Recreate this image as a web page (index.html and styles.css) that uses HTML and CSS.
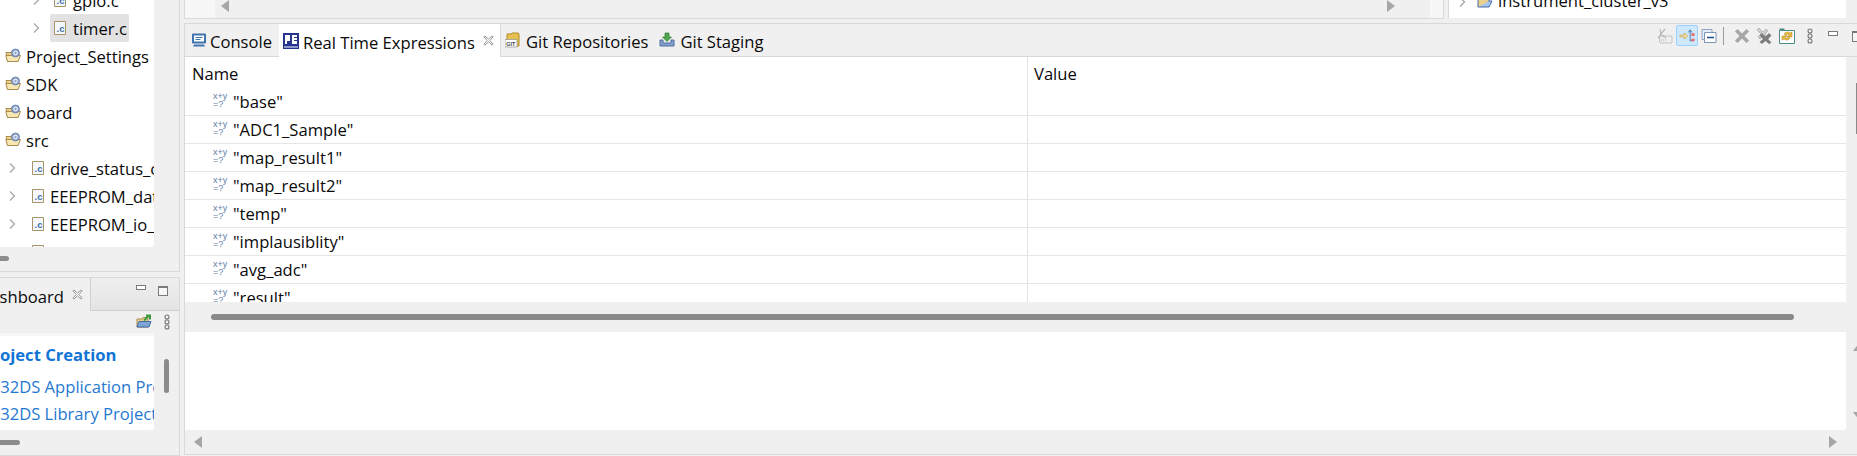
FILE: index.html
```html
<!DOCTYPE html>
<html lang="en">
<head>
<meta charset="utf-8">
<title>Real Time Expressions</title>
<link rel="stylesheet" href="styles.css">
</head>
<body>
<svg class="defs" aria-hidden="true">
  <symbol id="chev" viewBox="0 0 8 12"><path d="M2 1.500 6.500 6 2 10.500" fill="none" stroke="#a8a8a8" stroke-width="1.300"/></symbol>
  <symbol id="cfile" viewBox="0 0 16 16"><path d="M2.500 1.500h11v13h-11z" fill="#f4f7fb" stroke="#a89466"/><text x="4.500" y="12" font-family="Liberation Sans" font-weight="700" font-size="9.500" fill="#3f6fa8">.c</text></symbol>
  <symbol id="cfolder" viewBox="0 0 16 16"><path d="M1 4.500h5l1-1.500h6l.5 2V13H2.500z" fill="#e9d08c" stroke="#a98b4c"/><path d="M.8 7.500h10.700l4 0L13 13.500H2.500z" fill="#f6e7b5" stroke="#a98b4c"/><circle cx="10.500" cy="5" r="4" fill="#8ea6cf" stroke="#5e79a8" stroke-width=".8"/><circle cx="10.500" cy="5" r="1.800" fill="none" stroke="#fff"/></symbol>
  <symbol id="xy" viewBox="0 0 16 16"><text x="0" y="7" font-family="Liberation Sans" font-size="9" fill="#5f7da6">x+y</text><text x="0" y="15" font-family="Liberation Sans" font-size="9" fill="#5f7da6">=?</text></symbol>
  <symbol id="close" viewBox="0 0 12 12"><path d="M2 1 6 4.500 10 1l1 1-3.500 4L11 10l-1 1-4-3.500L2 11l-1-1 3.500-4L1 2z" fill="#fff" stroke="#8a8a8a"/></symbol>
  <symbol id="kebab" viewBox="0 0 6 16"><g fill="none" stroke="#777" stroke-width="1.100"><circle cx="3" cy="3" r="2"/><circle cx="3" cy="8" r="2"/><circle cx="3" cy="13" r="2"/></g></symbol>
  <symbol id="bigx" viewBox="0 0 16 16"><path d="M3.500 1 8 5.500 12.500 1 15 3.500 10.500 8l4.500 4.500-2.500 2.500L8 10.500 3.500 15 1 12.500 5.500 8 1 3.500z" fill="#a6a6a6"/></symbol>
</svg>
<div class="app">
  <aside class="left">
    <section class="explorer">
      <div class="tree">
        <div class="row lvl2 first"><svg class="chev"><use href="#chev"/></svg><svg class="ico"><use href="#cfile"/></svg><span>gpio.c</span></div>
        <div class="row lvl2"><svg class="chev"><use href="#chev"/></svg><span class="sel"><svg class="ico"><use href="#cfile"/></svg><span>timer.c</span></span></div>
        <div class="row lvl0"><svg class="ico"><use href="#cfolder"/></svg><span>Project_Settings</span></div>
        <div class="row lvl0"><svg class="ico"><use href="#cfolder"/></svg><span>SDK</span></div>
        <div class="row lvl0"><svg class="ico"><use href="#cfolder"/></svg><span>board</span></div>
        <div class="row lvl0"><svg class="ico"><use href="#cfolder"/></svg><span>src</span></div>
        <div class="row lvl1"><svg class="chev"><use href="#chev"/></svg><svg class="ico"><use href="#cfile"/></svg><span>drive_status_check.c</span></div>
        <div class="row lvl1"><svg class="chev"><use href="#chev"/></svg><svg class="ico"><use href="#cfile"/></svg><span>EEEPROM_data.c</span></div>
        <div class="row lvl1"><svg class="chev"><use href="#chev"/></svg><svg class="ico"><use href="#cfile"/></svg><span>EEEPROM_io_func.c</span></div>
        <div class="row lvl1"><svg class="chev"><use href="#chev"/></svg><svg class="ico"><use href="#cfile"/></svg><span>main.c</span></div>
      </div>
      <div class="lscroll"><i class="thumb-s"></i></div>
    </section>
    <section class="dash">
      <div class="dash-tabs">
        <div class="dash-tab"><span class="dash-title">Information Dashboard</span><svg class="close"><use href="#close"/></svg></div>
        <div class="winbtns">
          <i class="min"></i><i class="max"></i>
        </div>
      </div>
      <div class="dash-tools">
        <svg class="ico" viewBox="0 0 16 16"><path d="M1 5h5l1-1.500h5V13H1z" fill="#e9d08c" stroke="#a98b4c"/><path d="M1 13 3 7.500h12L13 13z" fill="#7ea4d8" stroke="#44699f"/><path d="M8 6.500 13 1.500m-3 0h4v4" fill="none" stroke="#3f9a3f" stroke-width="2"/></svg>
        <svg class="kebab"><use href="#kebab"/></svg>
      </div>
      <div class="dash-body">
        <div class="dash-content">
          <div class="dash-head">Project Creation</div>
          <a class="dash-link">STM32DS Application Project</a>
          <a class="dash-link">STM32DS Library Project</a>
        </div>
        <div class="dash-rail"><i class="thumb-v"></i></div>
      </div>
      <div class="lscroll dash-scroll"><i class="thumb-s2"></i></div>
    </section>
  </aside>
  <main class="right">
    <div class="top">
      <div class="top-scroll">
        <i class="corner"></i><i class="tri-l"></i><span class="grow"></span><i class="tri-r"></i><i class="corner2"></i>
      </div>
      <div class="outline">
        <svg class="chev"><use href="#chev"/></svg>
        <svg class="ico" viewBox="0 0 16 16"><path d="M1 13 4 7h11l-3 6z" fill="#a9c6ee" stroke="#44699f"/><path d="M1 13V4h5l1 1h5v2" fill="#e9d08c" stroke="#44699f"/></svg>
        <span>instrument_cluster_v3</span>
      </div>
    </div>
    <section class="expr">
      <div class="tabs">
        <div class="tab">
          <svg class="tab-ico" viewBox="0 0 16 16"><path d="M2 1.500h12a1 1 0 0 1 1 1v8a1 1 0 0 1-1 1H2a1 1 0 0 1-1-1v-8a1 1 0 0 1 1-1z" fill="#3f74ae"/><path d="M3 3.500h10v6H3z" fill="#fff"/><path d="M4.500 5.500h7M4.500 7.500h5" stroke="#3f74ae"/><path d="M3 12.500h10l1 2H2z" fill="#3f74ae"/></svg>
          <span>Console</span>
        </div>
        <div class="tab active">
          <svg class="tab-ico" viewBox="0 0 16 16"><path d="M0 0h16v16H0z" fill="#25358f"/><path d="M2 2h5v6H4v3H2zM9 2h5v2h-3v1h3v2h-3v1h3v3H9z" fill="#fff"/><path d="M1 13h14v2H1z" fill="#8e98c9"/></svg>
          <span>Real Time Expressions</span>
          <svg class="close tab-close"><use href="#close"/></svg>
        </div>
        <div class="tab plain">
          <svg class="tab-ico" viewBox="0 0 16 16"><path d="M2 2h4l1-1h6l1 1v12H2z" fill="#e6c04f" stroke="#b08a2a"/><path d="M0 7.500h12v7.500H0z" fill="#fff" stroke="#999" stroke-width=".8"/><text x="1.200" y="13.600" font-family="Liberation Sans" font-weight="700" font-size="5.500" fill="#444">GIT</text></svg>
          <span>Git Repositories</span>
        </div>
        <div class="tab plain">
          <svg class="tab-ico" viewBox="0 0 16 16"><path d="M1 8h3v3h8V8h3v6H1z" fill="#86a0cb" stroke="#4d6da3"/><path d="M6 1h4v4h2.500L8 9.500 3.500 5H6z" fill="#4fa64f" stroke="#2f7d2f" stroke-width=".7"/></svg>
          <span>Git Staging</span>
        </div>
        <div class="grow"></div>
        <div class="tools">
          <svg class="tool t-faded" viewBox="0 0 16 16"><path d="M2 8h13v7H3z" fill="#eeeeee" stroke="#c4c4c4"/><path d="M3 1 4 7 1 10M8 1 3 7m2 0 4 3" fill="none" stroke="#b9b9b9" stroke-width="1.200"/><path d="M4 12h1m1 0h1m1 0h1" stroke="#aaa"/></svg>
          <span class="tool-on">
            <svg class="tool" viewBox="0 0 18 16"><path d="M1 7h5V4.500L10 8l-4 3.500V9H1z" fill="#f3e3a8" stroke="#c7a548" stroke-width=".8"/><path d="M12.500 6V2m-2 2 2-3 2 3M12.500 6v7.500h2" fill="none" stroke="#3f6f9f"/><path d="M14 5h3.500v3H14zM14 11h3.500v3H14z" fill="#e26a6a"/></svg>
          </span>
          <svg class="tool t-coll" viewBox="0 0 16 16"><path d="M1 1.500h10v10H1z" fill="#e6edf6" stroke="#8fa3bf"/><path d="M3.500 4.500h11.500v10H3.500z" fill="#fff" stroke="#7e95b5"/><path d="M6 9.500h7" stroke="#24528a" stroke-width="1.600"/></svg>
          <i class="vsep"></i>
          <svg class="tool t-x"><use href="#bigx"/></svg>
          <svg class="tool t-xx" viewBox="0 0 16 16"><path d="M3 0 7 4l3-3 2 2-3 3 4 4-2 2-4-4-3 3-2-2 3-3-4-4z" fill="#cfcfcf" stroke="#9a9a9a" stroke-width=".6"/><path d="M6 5 9.500 8.500 13 5l2.500 2.500L12 11l3.500 3.500L13 16l-3.500-3L6 16l-2.500-2L7 11 3.500 7.500z" fill="#7d7d7d"/></svg>
          <svg class="tool t-sync" viewBox="0 0 16 16"><path d="M.5 2.500h15v13H.5z" fill="#fff" stroke="#4e8a86"/><path d="M.5 2.500V.5h5v2" fill="#4e8a86"/><path d="M5 6c1-2 4-3 6-1l2-1v5H8l2-2c-1-1-3-1-3 1z" fill="#e8b63c" stroke="#b08a2a" stroke-width=".5"/><path d="M11 10c-1 2-4 3-6 1l-2 1V8h5l-2 1.500c1 1 3 1 3-.5z" fill="#e8b63c" stroke="#b08a2a" stroke-width=".5"/></svg>
          <svg class="kebab t-keb"><use href="#kebab"/></svg>
          <i class="min t-min"></i>
          <i class="max t-max"></i>
        </div>
      </div>
      <div class="expr-body">
        <div class="expr-main">
          <div class="table">
            <div class="thead"><div class="cell name">Name</div><div class="cell value">Value</div></div>
            <div class="trow"><div class="cell name"><svg class="xy"><use href="#xy"/></svg>"base"</div><div class="cell value"></div></div>
            <div class="trow"><div class="cell name"><svg class="xy"><use href="#xy"/></svg>"ADC1_Sample"</div><div class="cell value"></div></div>
            <div class="trow"><div class="cell name"><svg class="xy"><use href="#xy"/></svg>"map_result1"</div><div class="cell value"></div></div>
            <div class="trow"><div class="cell name"><svg class="xy"><use href="#xy"/></svg>"map_result2"</div><div class="cell value"></div></div>
            <div class="trow"><div class="cell name"><svg class="xy"><use href="#xy"/></svg>"temp"</div><div class="cell value"></div></div>
            <div class="trow"><div class="cell name"><svg class="xy"><use href="#xy"/></svg>"implausiblity"</div><div class="cell value"></div></div>
            <div class="trow"><div class="cell name"><svg class="xy"><use href="#xy"/></svg>"avg_adc"</div><div class="cell value"></div></div>
            <div class="trow"><div class="cell name"><svg class="xy"><use href="#xy"/></svg>"result"</div><div class="cell value"></div></div>
          </div>
          <div class="table-scroll"><i class="table-thumb"></i></div>
          <div class="blank"></div>
          <div class="bottom-scroll"><i class="tri-l"></i><span class="grow"></span><i class="tri-r"></i></div>
        </div>
        <div class="rail">
          <i class="rail-thumb"></i>
          <i class="tri-u"></i>
          <i class="tri-d"></i>
        </div>
      </div>
    </section>
  </main>
</div>
</body>
</html>
```
FILE: styles.css
```css
* { box-sizing: border-box; }
html, body { margin: 0; padding: 0; }
body {
  width: 1857px;
  height: 456px;
  overflow: hidden;
  background: #f0f0f0;
  font-family: "Open Sans", "Noto Sans", sans-serif;
  font-size: 16.600px;
  color: #0a0a0a;
}
.defs { display: none; }
svg { display: block; flex: none; }
i { display: block; flex: none; }
.grow { flex: 1; }

.app { display: flex; height: 456px; gap: 4px; }

/* Left column */
.left { width: 180px; flex: none; display: flex; flex-direction: column; gap: 5px; }
.explorer { height: 272px; border-right: 1px solid #d9d9d9; border-bottom: 1px solid #d9d9d9; display: flex; flex-direction: column; overflow: hidden; }
.tree { height: 247px; width: 154px; flex: none; background: #fff; overflow: hidden; border-radius: 0 0 3px 0; }
.row { height: 28px; display: flex; align-items: center; white-space: nowrap; overflow: hidden; }
.row.first { margin-top: -14px; }
.row .ico { width: 16px; height: 16px; }
.chev { width: 8px; height: 12px; }
.lvl0 { padding-left: 5px; gap: 5px; }
.lvl1 { padding-left: 8px; }
.lvl1 .ico { margin-left: 14px; margin-right: 4px; }
.lvl2 { padding-left: 32px; }
.lvl2 > .ico { margin-left: 12px; margin-right: 5px; }
.sel { display: flex; align-items: center; height: 28px; margin-left: 10px; padding: 0 2px; background: #e2e2e2; border-radius: 2px; }
.sel .ico { margin-right: 5px; }
.lscroll { flex: 1; display: flex; align-items: center; }
.thumb-s { width: 9px; height: 5px; margin-top: -1px; background: #8c8c8c; border-radius: 0 3px 3px 0; }
.thumb-s2 { width: 20px; height: 5px; background: #8c8c8c; border-radius: 0 3px 3px 0; }

.dash { flex: 1; min-height: 0; border-right: 1px solid #d9d9d9; border-bottom: 1px solid #d9d9d9; display: flex; flex-direction: column; }
.dash-tabs { height: 34px; flex: none; display: flex; border-top: 1px solid #d9d9d9; background: linear-gradient(#efefef, #e4e4e4); border-bottom: 1px solid #d0d0d0; }
.dash-tab { width: 91px; height: 33px; flex: none; background: #f0f0f0; border-right: 1px solid #d0d0d0; display: flex; align-items: center; justify-content: flex-end; padding-right: 7px; overflow: hidden; white-space: nowrap; gap: 8px; }
.dash-title { flex: none; padding-top: 3px; }
.close { width: 11px; height: 11px; }
.winbtns { flex: 1; display: flex; align-items: flex-start; padding: 7px 0 0 45px; gap: 12px; }
.min { width: 10px; height: 5px; margin-top: 0; border: 1px solid #7a7a7a; background: #fff; }
.max { width: 10px; height: 9px; border: 1px solid #7a7a7a; border-top-width: 2px; background: #f7f7f7; }
.winbtns .max { width: 10px; height: 10px; margin-top: 1px; }
.dash-tools { height: 22px; flex: none; display: flex; align-items: center; justify-content: flex-end; padding-right: 9px; gap: 12px; }
.dash-tools .ico { width: 16px; height: 16px; }
.kebab { width: 6px; height: 16px; }
.dash-body { height: 97px; flex: none; display: flex; }
.dash-content { width: 154px; flex: none; background: #fff; overflow: hidden; border-radius: 0 0 3px 0; border-top: 3px solid #f6f6f6; white-space: nowrap; }
.dash-head { height: 38px; line-height: 37px; margin-left: -18px; font-weight: 700; color: #0f74d6; }
.dash-link { display: block; height: 27px; line-height: 26px; margin-left: -33px; color: #1f78d1; }
.dash-rail { flex: 1; padding: 26px 0 0 10px; }
.thumb-v { width: 5px; height: 34px; background: #8c8c8c; border-radius: 3px; }
.dash-scroll { flex: 1; }

/* Right column */
.right { flex: 1; min-width: 0; display: flex; flex-direction: column; gap: 4px; }
.top { height: 19px; flex: none; display: flex; gap: 4px; }
.top-scroll { width: 1260px; flex: none; display: flex; align-items: center; padding-bottom: 7px; border: solid #d9d9d9; border-width: 0 1px 1px; height: 19px; overflow: hidden; }
.corner { width: 30px; height: 19px; margin-top: 7px; background: #f7f7f7; }
.corner2 { width: 13px; height: 19px; margin-top: 7px; background: #f7f7f7; }
.tri-l { width: 0; height: 0; border: 6px solid transparent; border-right: 8px solid #a6a6a6; border-left: 0; }
.tri-r { width: 0; height: 0; border: 6px solid transparent; border-left: 8px solid #a6a6a6; border-right: 0; }
.top-scroll .tri-l { margin-left: 6px; }
.top-scroll .tri-r { margin-right: 35px; }
.outline { flex: 1; display: flex; align-items: center; background: #fff; height: 18px; border-left: 1px solid #d9d9d9; margin-right: 11px; padding-left: 9px; white-space: nowrap; overflow: hidden; }
.outline .chev { width: 8px; height: 12px; margin-top: -14px; }
.outline .ico { width: 16px; height: 16px; margin: -14px 5px 0 11px; }
.outline span { margin-top: -18px; }

.expr { flex: 1; min-height: 0; display: flex; flex-direction: column; border: solid #d9d9d9; border-width: 1px 0 1px 1px; margin-bottom: 1px; }
.tabs { height: 33px; flex: none; display: flex; border-bottom: 1px solid #d9d9d9; }
.tab { height: 32px; display: flex; align-items: center; white-space: nowrap; flex: none; }
.tab span { padding-top: 3px; }
.tab:first-child { width: 94px; padding-left: 6px; gap: 3px; }
.tab.active { width: 222px; height: 33px; padding-left: 4px; background: #fff; gap: 4px; border-right: 1px solid #d9d9d9; }
.tab-close { margin-left: 4px; }
.tab-ico { width: 16px; height: 16px; }
.plain { padding-left: 4px; gap: 5px; margin-right: 7px; }
.tools { display: flex; align-items: flex-start; height: 32px; padding-top: 4px; }
.tool { width: 16px; height: 16px; }
.tool-on { display: flex; align-items: center; justify-content: center; width: 22px; height: 21px; margin: -3px 3px 0; background: #cde8ff; border: 1px solid #99d1ff; border-radius: 2px; }
.vsep { width: 1px; height: 18px; background: #9a9a9a; margin: -1px 10px 0 6px; }
.t-xx { margin: 0 7px 0 6px; }
.t-keb { margin: 0 15px 0 12px; }
.t-min { margin: 3px 14px 0 0; }
.t-max { width: 10px; height: 11px; margin: 3px -5px 0 0; }

.expr-body { flex: 1; min-height: 0; display: flex; }
.expr-main { width: 1661px; flex: none; display: flex; flex-direction: column; }
.table { height: 245px; flex: none; background: #fff; overflow: hidden; }
.thead { height: 31px; display: flex; }
.trow { height: 28px; display: flex; border-bottom: 1px solid #e6e6e6; }
.cell { display: flex; align-items: center; white-space: nowrap; }
.name { width: 843px; flex: none; border-right: 1px solid #e3e3e3; padding-left: 28px; }
.thead .name { padding-left: 7px; padding-top: 2px; }
.thead .value { padding-left: 6px; padding-top: 2px; }
.value { flex: 1; }
.xy { width: 16px; height: 16px; margin-right: 4px; margin-top: -3px; }
.table-scroll { height: 30px; flex: none; display: flex; align-items: center; padding-left: 26px; }
.table-thumb { width: 1583px; height: 6px; background: #8a8a8a; border-radius: 3px; }
.blank { height: 98px; flex: none; background: #fff; border-radius: 0 0 3px 0; }
.bottom-scroll { flex: 1; display: flex; align-items: center; padding: 0 9px; }
.rail { flex: 1; display: flex; flex-direction: column; overflow: hidden; }
.rail-thumb { width: 3px; height: 51px; margin: 26px 0 0 10px; background: #8a8a8a; }
.tri-u { width: 0; height: 0; margin: 209px 0 0 7px; border: 6px solid transparent; border-bottom: 8px solid #a6a6a6; border-top: 0; }
.tri-d { width: 0; height: 0; margin: 61px 0 0 7px; border: 6px solid transparent; border-top: 8px solid #a6a6a6; border-bottom: 0; }
```
